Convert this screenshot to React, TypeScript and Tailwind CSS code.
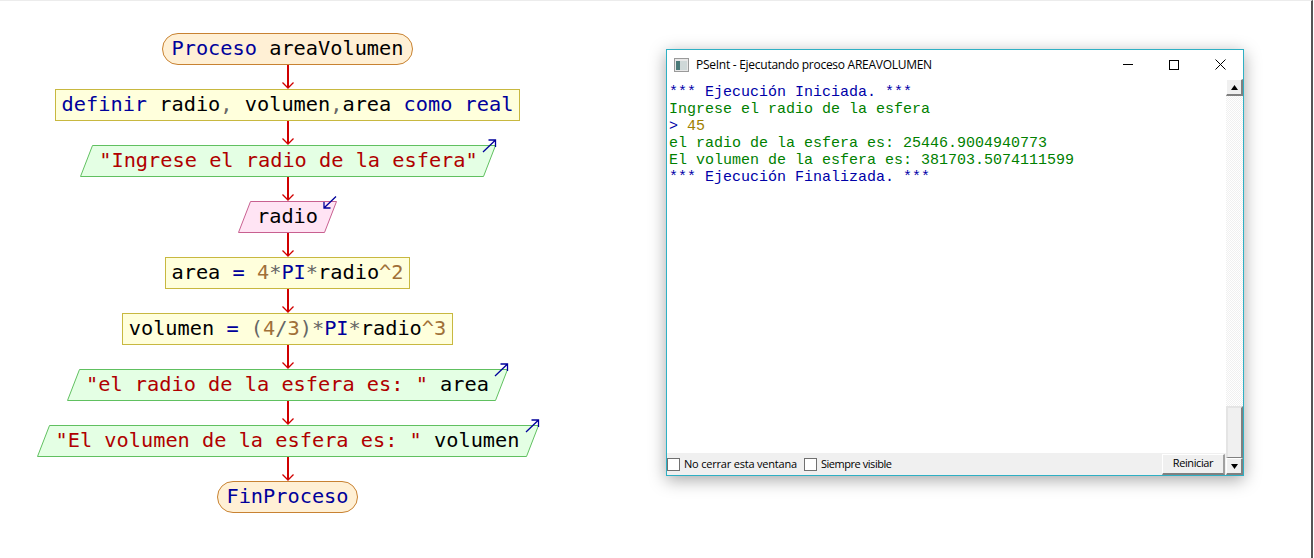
import type { ReactNode } from 'react';

const K = ({ children }: { children: ReactNode }) => <span className="text-[#00009b]">{children}</span>;
const S = ({ children }: { children: ReactNode }) => <span className="text-[#b00000]">{children}</span>;
const N = ({ children }: { children: ReactNode }) => <span className="text-[#a07038]">{children}</span>;
const O = ({ children }: { children: ReactNode }) => <span className="text-[#666666]">{children}</span>;

function Connector() {
  return (
    <svg width="16" height="24" viewBox="0 0 16 24" className="block shrink-0">
      <path d="M8 0V23" stroke="#d00000" strokeWidth="2" fill="none" />
      <path d="M2.5 17.5L8 23L13.5 17.5" stroke="#d00000" strokeWidth="1.3" fill="none" />
    </svg>
  );
}

function Terminal({ width, children }: { width: string; children: ReactNode }) {
  return (
    <div className={`${width} h-8 shrink-0 flex items-center justify-center rounded-full border border-[#c88232] bg-[#fff0d5] whitespace-pre pb-[2px]`}>
      <span>{children}</span>
    </div>
  );
}

function Assign({ width, children }: { width: string; children: ReactNode }) {
  return (
    <div className={`${width} h-8 shrink-0 flex items-center justify-center border border-[#c8b840] bg-[#ffffdc] whitespace-pre pb-[2px]`}>
      <span>{children}</span>
    </div>
  );
}

function Slanted({ w, fill, stroke, children, arrow, className }: { w: number; fill: string; stroke: string; children: ReactNode; arrow: 'out' | 'in'; className: string }) {
  return (
    <div className={`relative ${className} h-8 shrink-0 flex items-center justify-center whitespace-pre pb-[2px]`}>
      <svg width={w} height="32" className="absolute left-0 top-0">
        <polygon points={`12.5,0.5 ${w - 0.5},0.5 ${w - 12.5},31.5 0.5,31.5`} fill={fill} stroke={stroke} strokeWidth="1" />
      </svg>
      <span className="relative">{children}</span>
      {arrow === 'out' ? (
        <svg width="16" height="16" viewBox="0 0 16 16" className="absolute right-[-1px] top-[-6px]">
          <path d="M2 13L14 1.5M7.5 1H14.5V8" stroke="#00009b" strokeWidth="1.3" fill="none" />
        </svg>
      ) : (
        <svg width="16" height="16" viewBox="0 0 16 16" className="absolute right-[-1px] top-[-6px]">
          <path d="M14 1.5L2.5 12.5M2 7V13H8.5" stroke="#00009b" strokeWidth="1.3" fill="none" />
        </svg>
      )}
    </div>
  );
}

function Flowchart() {
  return (
    <div className="w-[575px] shrink-0 pt-8 flex flex-col items-center text-black text-[20.3px] leading-none font-['DejaVu_Sans_Mono',monospace]">
      <Terminal width="w-[251px]"><K>Proceso</K> areaVolumen</Terminal>
      <Connector />
      <Assign width="w-[465px]"><K>definir</K> radio<O>,</O> volumen<O>,</O>area <K>como</K> <K>real</K></Assign>
      <Connector />
      <Slanted w={416} className="w-[416px] pl-[2px]" fill="#e4ffe4" stroke="#60c060" arrow="out"><S>"Ingrese el radio de la esfera"</S></Slanted>
      <Connector />
      <Slanted w={99} className="w-[99px]" fill="#ffe4f4" stroke="#c86090" arrow="in">radio</Slanted>
      <Connector />
      <Assign width="w-[245px]">area <K>=</K> <N>4</N><O>*</O><K>PI</K><O>*</O>radio<N>^2</N></Assign>
      <Connector />
      <Assign width="w-[331px]">volumen <K>=</K> <O>(</O><N>4</N><O>/</O><N>3</N><O>)*</O><K>PI</K><O>*</O>radio<N>^3</N></Assign>
      <Connector />
      <Slanted w={441} className="w-[441px]" fill="#e4ffe4" stroke="#60c060" arrow="out"><S>"el radio de la esfera es: "</S> area</Slanted>
      <Connector />
      <Slanted w={502} className="w-[502px]" fill="#e4ffe4" stroke="#60c060" arrow="out"><S>"El volumen de la esfera es: "</S> volumen</Slanted>
      <Connector />
      <Terminal width="w-[141px]"><K>FinProceso</K></Terminal>
    </div>
  );
}

function ScrollButton({ down }: { down?: boolean }) {
  return (
    <div className="w-[17px] h-[17px] shrink-0 flex items-center justify-center bg-[#f0f0f0] border-t border-l border-white border-r-2 border-b-2 border-r-[#808080] border-b-[#808080]">
      <svg width="9" height="5" viewBox="0 0 9 5">
        <polygon points={down ? '1,0 8,0 4.5,5' : '4.5,0 8,5 1,5'} fill="#000000" />
      </svg>
    </div>
  );
}

function Checkbox({ label, className }: { label: string; className: string }) {
  return (
    <div className="flex items-center gap-[4px]">
      <div className="w-[13px] h-[13px] bg-white border border-[#707070]" />
      <span className={className}>{label}</span>
    </div>
  );
}

function ConsoleWindow() {
  return (
    <div className="ml-[91px] mt-[48px] w-[578px] h-[427px] shrink-0 flex flex-col bg-white border border-[#2eb0c4] shadow-[0_4px_16px_rgba(0,0,0,0.35)]">
      <div className="h-[29px] shrink-0 flex items-center pl-[7px] font-['Open_Sans',sans-serif] text-[12px] text-black">
        <svg width="15" height="14" viewBox="0 0 15 14" className="mr-[7px]">
          <rect x="0.5" y="0.5" width="14" height="13" fill="#e8e8e8" stroke="#9a9a9a" />
          <rect x="2" y="3" width="4" height="9" fill="#4a7a78" />
          <rect x="6" y="3" width="7" height="9" fill="#cfd8d8" />
        </svg>
        <span className="tracking-[-0.27px]">PSeInt - Ejecutando proceso AREAVOLUMEN</span>
        <div className="ml-auto flex items-center">
          <div className="w-[46px] flex justify-center"><div className="w-[10px] h-px bg-black" /></div>
          <div className="w-[46px] flex justify-center"><div className="w-[10px] h-[10px] border border-black" /></div>
          <div className="w-[46px] flex justify-center">
            <svg width="11" height="11" viewBox="0 0 11 11"><path d="M0.5 0.5L10.5 10.5M10.5 0.5L0.5 10.5" stroke="#000000" strokeWidth="1" /></svg>
          </div>
        </div>
      </div>
      <div className="flex-1 flex min-h-0">
        <div className="flex-1 flex flex-col min-w-0">
          <div className="flex-1 pl-[2px] pt-[5px] font-['Liberation_Mono',monospace] text-[15px] leading-[17px] whitespace-pre">
            <div className="text-[#0000a8]">*** Ejecución Iniciada. ***</div>
            <div className="text-[#008000]">Ingrese el radio de la esfera</div>
            <div className="text-[#a08000]"><span className="text-[#0000a8]">&gt;</span> 45</div>
            <div className="text-[#008000]">el radio de la esfera es: 25446.9004940773</div>
            <div className="text-[#008000]">El volumen de la esfera es: 381703.5074111599</div>
            <div className="text-[#0000a8]">*** Ejecución Finalizada. ***</div>
          </div>
          <div className="h-[22px] shrink-0 flex items-center gap-[7px] bg-[#f0f0f0] text-[11px] text-black font-['Open_Sans',sans-serif]">
            <Checkbox label="No cerrar esta ventana" className="tracking-[-0.2px]" />
            <Checkbox label="Siempre visible" className="tracking-[-0.45px]" />
            <div className="ml-auto mr-[1px] w-[63px] h-[21px] flex items-center justify-center bg-[#f0f0f0] border-t border-l border-white border-r-2 border-b-2 border-r-[#a0a0a0] border-b-[#808080] tracking-[-0.4px]">Reiniciar</div>
          </div>
        </div>
        <div className="w-[17px] shrink-0 flex flex-col bg-[repeating-conic-gradient(#f0f0f0_0_25%,#ffffff_0_50%)] bg-[length:2px_2px]">
          <ScrollButton />
          <div className="flex-1" />
          <div className="h-[52px] shrink-0 bg-[#f0f0f0] border-t-2 border-l-2 border-[#e4e4e4] border-r-2 border-r-[#808080] border-b border-b-[#808080]" />
          <ScrollButton down />
        </div>
      </div>
    </div>
  );
}

export default function App() {
  return (
    <div className="w-[1313px] h-[558px] flex items-start overflow-hidden bg-white border-t border-[#ececec] border-r-2 border-r-[#555555]">
      <Flowchart />
      <ConsoleWindow />
    </div>
  );
}
